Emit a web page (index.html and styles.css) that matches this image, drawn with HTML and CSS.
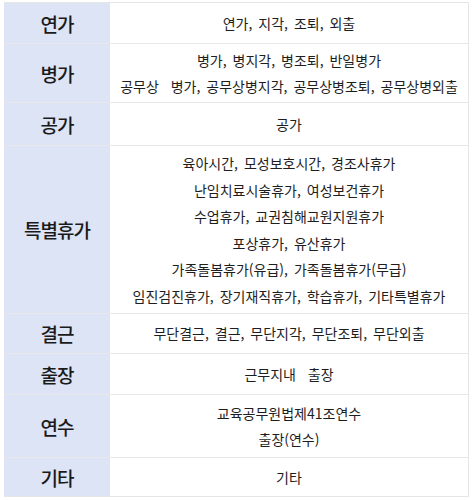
FILE: index.html
```html
<!DOCTYPE html>
<html lang="ko">
<head>
<meta charset="utf-8">
<link rel="stylesheet" href="styles.css">
</head>
<body>
<div class="table">
  <div class="row r1"><div class="label">연가</div><div class="cell"><p>연가, 지각, 조퇴, 외출</p></div></div>
  <div class="row r2"><div class="label">병가</div><div class="cell"><p>병가, 병지각, 병조퇴, 반일병가</p><p>공무상&nbsp; 병가, 공무상병지각, 공무상병조퇴, 공무상병외출</p></div></div>
  <div class="row r3"><div class="label">공가</div><div class="cell"><p>공가</p></div></div>
  <div class="row r4"><div class="label">특별휴가</div><div class="cell">
    <p>육아시간, 모성보호시간, 경조사휴가</p>
    <p>난임치료시술휴가, 여성보건휴가</p>
    <p>수업휴가, 교권침해교원지원휴가</p>
    <p>포상휴가, 유산휴가</p>
    <p>가족돌봄휴가(유급), 가족돌봄휴가(무급)</p>
    <p>임진검진휴가, 장기재직휴가, 학습휴가, 기타특별휴가</p>
  </div></div>
  <div class="row r5"><div class="label">결근</div><div class="cell"><p>무단결근, 결근, 무단지각, 무단조퇴, 무단외출</p></div></div>
  <div class="row r6"><div class="label">출장</div><div class="cell"><p>근무지내&nbsp; 출장</p></div></div>
  <div class="row r7"><div class="label">연수</div><div class="cell"><p>교육공무원법제41조연수</p><p>출장(연수)</p></div></div>
  <div class="row r8"><div class="label">기타</div><div class="cell"><p>기타</p></div></div>
</div>
</body>
</html>
```

FILE: styles.css
```css
html, body {
  margin: 0;
  padding: 0;
  background: #ffffff;
}
body {
  font-family: "Noto Sans CJK KR", "Noto Sans", sans-serif;
  color: #1e1e1e;
}
.table {
  margin: 2px 0 0 4px;
  width: 465px;
  border: 1px solid #e6e6e6;
  border-left: none;
  box-sizing: border-box;
}
.row {
  display: grid;
  grid-template-columns: 106px 1fr;
  border-bottom: 1px solid #e8e8e8;
  box-sizing: border-box;
}
.row:last-child { border-bottom: none; }
.r1 { height: 41px; }
.r2 { height: 59px; }
.r3 { height: 43px; }
.r4 { height: 168px; }
.r5 { height: 40px; }
.r6 { height: 41px; }
.r7 { height: 63px; }
.r8 { height: 38px; }
.label {
  background: #dde4f5;
  display: flex;
  align-items: center;
  justify-content: center;
  font-size: 19px;
  font-weight: 500;
  letter-spacing: -1px;
  color: #1a1a1a;
}
.cell {
  display: flex;
  flex-direction: column;
  align-items: center;
  justify-content: center;
  font-size: 14px;
  line-height: 26.5px;
  white-space: nowrap;
  word-spacing: 2px;
}
.cell p { margin: 0; }
```
